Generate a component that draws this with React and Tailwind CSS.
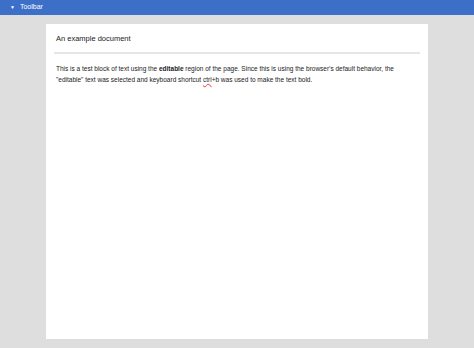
export default function App() {
  return (
    <div className="flex flex-col h-[348px] w-[474px] bg-[#dedede] overflow-hidden font-['Liberation_Sans',Arial,sans-serif]">
      <div className="flex items-center h-[15px] bg-[#3b6fc8] pl-[10px] text-white text-[7px] shrink-0">
        <span className="text-[5px] mr-[5px]">▼</span>
        <span>Toolbar</span>
      </div>
      <div className="flex-1 flex pl-[46px] pt-[9px]">
        <div className="w-[382px] h-[315px] bg-white px-[10px]">
          <div className="pt-[10px] pb-[8px] text-[7.5px] leading-[10px] text-[#222]">An example document</div>
          <div className="h-[2px] bg-[#e6e6e6] -mx-[2px]"></div>
          <p className="pt-[9px] text-[6.5px] leading-[11px] text-[#222]">
            This is a test block of text using the <b>editable</b> region of the page. Since this is using the browser's default behavior, the
            "editable" text was selected and keyboard shortcut{" "}
            <span className="underline decoration-wavy decoration-red-500 decoration-[0.5px]">ctrl</span>+b was used to make the text bold.
          </p>
        </div>
      </div>
    </div>
  );
}
